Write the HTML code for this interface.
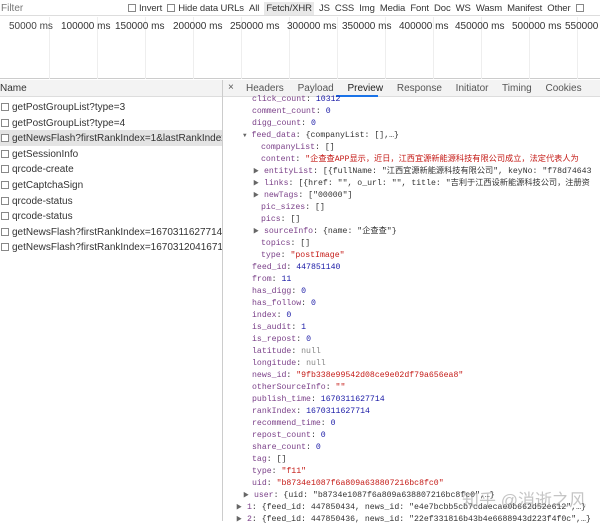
<!DOCTYPE html><html><head><style>
*{margin:0;padding:0;box-sizing:border-box}
body{width:600px;height:521px;overflow:hidden;background:#fff;font-family:"Liberation Sans",sans-serif;font-size:10px;color:#333;position:relative}
.a{position:absolute;white-space:nowrap}
.cb{display:inline-block;width:8px;height:8px;border:1px solid #888;vertical-align:-1px;margin-right:3px;background:#fff}
.mono{font-family:"Liberation Mono","Noto Sans CJK SC",monospace;font-size:8.2px;line-height:12px}
.k{color:#7a3f88}.n{color:#1a1aa6}.s{color:#c41a16}.g{color:#888}.t{color:#333}
.ar{font-size:6px;color:#666}
</style></head><body>
<div class="a" style="left:0;top:0;width:600px;height:16px;border-bottom:1px solid #ddd"></div>
<div class="a" style="left:1px;top:3px;color:#777">Filter</div>
<div class="a" style="left:128px;top:3px;font-size:9.5px;letter-spacing:-0.1px"><span class="cb"></span>Invert &nbsp;<span class="cb"></span>Hide data URLs &nbsp;All &nbsp;<span style="background:#e8e8e8;padding:1px 2px">Fetch/XHR</span> &nbsp;JS &nbsp;CSS &nbsp;Img &nbsp;Media &nbsp;Font &nbsp;Doc &nbsp;WS &nbsp;Wasm &nbsp;Manifest &nbsp;Other &nbsp;<span class="cb"></span></div>
<div class="a" style="left:0;top:17px;width:600px;height:62px;border-bottom:1px solid #ccc"></div>
<div class="a" style="top:17px;left:0;width:600px;height:62px;background:repeating-linear-gradient(90deg,transparent 0 47px,#eee 47px 48px);background-position:2px 0"></div>
<div class="a" style="left:9px;top:21px;color:#444">50000 ms</div>
<div class="a" style="left:61px;top:21px">100000 ms</div>
<div class="a" style="left:115px;top:21px">150000 ms</div>
<div class="a" style="left:173px;top:21px">200000 ms</div>
<div class="a" style="left:230px;top:21px">250000 ms</div>
<div class="a" style="left:287px;top:21px">300000 ms</div>
<div class="a" style="left:342px;top:21px">350000 ms</div>
<div class="a" style="left:399px;top:21px">400000 ms</div>
<div class="a" style="left:455px;top:21px">450000 ms</div>
<div class="a" style="left:512px;top:21px">500000 ms</div>
<div class="a" style="left:565px;top:21px">550000</div>
<div class="a" style="left:0;top:80px;width:600px;height:17px;background:#f3f3f3;border-bottom:1px solid #ddd"></div>
<div class="a" style="left:0;top:83px">Name</div>
<div class="a" style="left:222px;top:80px;width:1px;height:441px;background:#ccc"></div>
<div class="a" style="left:228px;top:82px;color:#555">×</div>
<div class="a" style="left:246px;top:83px;color:#555;word-spacing:11px">Headers Payload <span style="color:#222">Preview</span> Response Initiator Timing Cookies</div>
<div class="a" style="left:336px;top:95px;width:42px;height:2px;background:#1a73e8"></div>
<div class="a" style="left:0;top:130px;width:222px;height:16px;background:#e4e4e4"></div>
<div class="a" style="left:1px;top:100px;line-height:15.6px;color:#333;width:221px;overflow:hidden">
<div><span class="cb"></span>getPostGroupList?type=3</div>
<div><span class="cb"></span>getPostGroupList?type=4</div>
<div><span class="cb"></span>getNewsFlash?firstRankIndex=1&amp;lastRankIndex=...</div>
<div><span class="cb"></span>getSessionInfo</div>
<div><span class="cb"></span>qrcode-create</div>
<div><span class="cb"></span>getCaptchaSign</div>
<div><span class="cb"></span>qrcode-status</div>
<div><span class="cb"></span>qrcode-status</div>
<div><span class="cb"></span>getNewsFlash?firstRankIndex=1670311627714</div>
<div><span class="cb"></span>getNewsFlash?firstRankIndex=1670312041671</div>
</div>
<div class="a mono" style="left:236px;top:94px">
<div style="padding-left:16px"><span class="k">click_count</span>: <span class="n">10312</span></div>
<div style="padding-left:16px"><span class="k">comment_count</span>: <span class="n">0</span></div>
<div style="padding-left:16px"><span class="k">digg_count</span>: <span class="n">0</span></div>
<div style="padding-left:7px"><span class="ar">▼</span> <span class="k">feed_data</span>: <span class="t">{companyList: [],…}</span></div>
<div style="padding-left:25px"><span class="k">companyList</span>: []</div>
<div style="padding-left:25px"><span class="k">content</span>: <span class="s">"企查查APP显示，近日，江西宜源新能源科技有限公司成立，法定代表人为</span></div>
<div style="padding-left:17px"><span class="ar">▶</span> <span class="k">entityList</span>: <span class="t">[{fullName: "江西宜源新能源科技有限公司", keyNo: "f78d74643</span></div>
<div style="padding-left:17px"><span class="ar">▶</span> <span class="k">links</span>: <span class="t">[{href: "", o_url: "", title: "吉利于江西设新能源科技公司，注册资</span></div>
<div style="padding-left:17px"><span class="ar">▶</span> <span class="k">newTags</span>: <span class="t">["00000"]</span></div>
<div style="padding-left:25px"><span class="k">pic_sizes</span>: []</div>
<div style="padding-left:25px"><span class="k">pics</span>: []</div>
<div style="padding-left:17px"><span class="ar">▶</span> <span class="k">sourceInfo</span>: <span class="t">{name: "企查查"}</span></div>
<div style="padding-left:25px"><span class="k">topics</span>: []</div>
<div style="padding-left:25px"><span class="k">type</span>: <span class="s">"postImage"</span></div>
<div style="padding-left:16px"><span class="k">feed_id</span>: <span class="n">447851140</span></div>
<div style="padding-left:16px"><span class="k">from</span>: <span class="n">11</span></div>
<div style="padding-left:16px"><span class="k">has_digg</span>: <span class="n">0</span></div>
<div style="padding-left:16px"><span class="k">has_follow</span>: <span class="n">0</span></div>
<div style="padding-left:16px"><span class="k">index</span>: <span class="n">0</span></div>
<div style="padding-left:16px"><span class="k">is_audit</span>: <span class="n">1</span></div>
<div style="padding-left:16px"><span class="k">is_repost</span>: <span class="n">0</span></div>
<div style="padding-left:16px"><span class="k">latitude</span>: <span class="g">null</span></div>
<div style="padding-left:16px"><span class="k">longitude</span>: <span class="g">null</span></div>
<div style="padding-left:16px"><span class="k">news_id</span>: <span class="s">"9fb338e99542d08ce9e02df79a656ea8"</span></div>
<div style="padding-left:16px"><span class="k">otherSourceInfo</span>: <span class="s">""</span></div>
<div style="padding-left:16px"><span class="k">publish_time</span>: <span class="n">1670311627714</span></div>
<div style="padding-left:16px"><span class="k">rankIndex</span>: <span class="n">1670311627714</span></div>
<div style="padding-left:16px"><span class="k">recommend_time</span>: <span class="n">0</span></div>
<div style="padding-left:16px"><span class="k">repost_count</span>: <span class="n">0</span></div>
<div style="padding-left:16px"><span class="k">share_count</span>: <span class="n">0</span></div>
<div style="padding-left:16px"><span class="k">tag</span>: []</div>
<div style="padding-left:16px"><span class="k">type</span>: <span class="s">"f11"</span></div>
<div style="padding-left:16px"><span class="k">uid</span>: <span class="s">"b8734e1087f6a809a638807216bc8fc0"</span></div>
<div style="padding-left:7px"><span class="ar">▶</span> <span class="k">user</span>: <span class="t">{uid: "b8734e1087f6a809a638807216bc8fc0",…}</span></div>
<div><span class="ar">▶</span> <span class="k">1</span>: <span class="t">{feed_id: 447850434, news_id: "e4e7bcbb5cb7cdaecae0b662d52e612",…}</span></div>
<div><span class="ar">▶</span> <span class="k">2</span>: <span class="t">{feed_id: 447850436, news_id: "22ef331816b43b4e6688943d223f4f0c",…}</span></div>
</div>
<div class="a" style="left:462px;top:486px;font-family:'Liberation Sans','Noto Sans CJK SC',sans-serif;font-size:17px;color:rgba(150,150,150,0.55)">知乎 @消逝之风</div>
</body></html>
